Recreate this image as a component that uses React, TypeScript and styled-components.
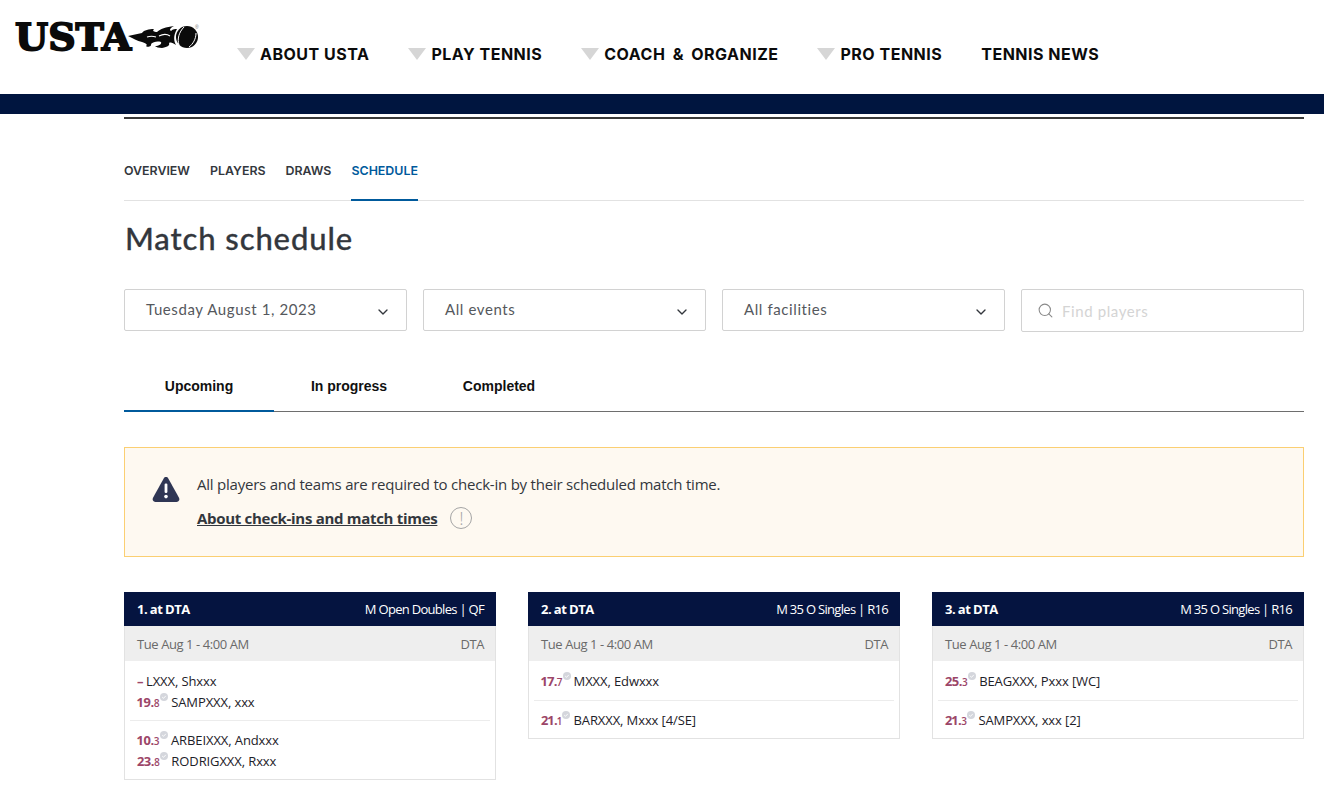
import React from 'react';
import styled, { createGlobalStyle } from 'styled-components';
import { ChevronDown, Search } from 'lucide-react';

const GlobalStyle = createGlobalStyle`
  html, body {
    margin: 0;
    padding: 0;
    background: #fff;
    overflow: hidden;
  }
  body {
    font-family: "Open Sans", "Noto Sans", sans-serif;
    color: #33373d;
  }
`;

type Player = { rating: string; sub?: string; name: string; check?: boolean };
type Match = { id: string; event: string; sides: Player[][] };

const navItems = [
  { label: 'ABOUT USTA', caret: true },
  { label: 'PLAY TENNIS', caret: true },
  { label: 'COACH & ORGANIZE', caret: true, wide: true },
  { label: 'PRO TENNIS', caret: true },
  { label: 'TENNIS NEWS', caret: false },
];

const matches: Match[] = [
  {
    id: '1. at DTA',
    event: 'M Open Doubles | QF',
    sides: [
      [
        { rating: '–', name: 'LXXX, Shxxx' },
        { rating: '19.', sub: '8', name: 'SAMPXXX, xxx', check: true },
      ],
      [
        { rating: '10.', sub: '3', name: 'ARBEIXXX, Andxxx', check: true },
        { rating: '23.', sub: '8', name: 'RODRIGXXX, Rxxx', check: true },
      ],
    ],
  },
  {
    id: '2. at DTA',
    event: 'M 35 O Singles | R16',
    sides: [
      [{ rating: '17.', sub: '7', name: 'MXXX, Edwxxx', check: true }],
      [{ rating: '21.', sub: '1', name: 'BARXXX, Mxxx [4/SE]', check: true }],
    ],
  },
  {
    id: '3. at DTA',
    event: 'M 35 O Singles | R16',
    sides: [
      [{ rating: '25.', sub: '3', name: 'BEAGXXX, Pxxx [WC]', check: true }],
      [{ rating: '21.', sub: '3', name: 'SAMPXXX, xxx [2]', check: true }],
    ],
  },
];

function Logo() {
  return (
    <LogoWrap>
      <LogoText>USTA</LogoText>
      <LogoMark width="72" height="28" viewBox="0 0 72 28">
        {/* flames */}
        <path
          d="M0 12 L14 9 C16 6 21 5 26 5 C24 7 26 8 29 8 C32 5 38 3 46 2 C42 4 41 6 43 7 C45 5 47 5 49 5 C46 10 45 16 48 21 C45 19 43 18 41 19 C42 21 40 23 34 24 C31 24 28 23 27 22 C31 22 34 20 33 18 C29 17 25 18 23 20 C24 22 20 24 18 22 C20 21 18 19 14 18 C9 17 5 14 0 12 Z"
          fill="#0a0a0a"
        />
        <path d="M31 12 C35 10 39 10 42 12 M19 13 C22 12 25 12 28 13" stroke="#fff" strokeWidth="1.1" fill="none" />
        {/* ball */}
        <circle cx="59" cy="13" r="11" fill="#0a0a0a" />
        <path d="M56 3 C51 8 49 15 51 21 M68 9 C68 15 65 20 61 23" stroke="#fff" strokeWidth="1" fill="none" />
        <text x="67" y="5" fontSize="5" fontFamily="Liberation Sans, sans-serif" fill="#777">®</text>
      </LogoMark>
    </LogoWrap>
  );
}

function WarningIcon() {
  return (
    <WarningSvg width="28" height="27" viewBox="0 0 28 27">
      <path
        d="M14 1 C15 1 15.8 1.5 16.3 2.4 L27 21.8 C28 23.7 26.8 26 24.6 26 L3.4 26 C1.2 26 0 23.7 1 21.8 L11.7 2.4 C12.2 1.5 13 1 14 1 Z"
        fill="#2f3654"
      />
      <rect x="12.6" y="7.5" width="2.8" height="9.5" rx="1.2" fill="#fff" />
      <circle cx="14" cy="20.6" r="1.8" fill="#fff" />
    </WarningSvg>
  );
}

function CheckBadge() {
  return (
    <BadgeSvg width="8" height="8" viewBox="0 0 8 8">
      <circle cx="4" cy="4" r="4" fill="#d4d6dc" />
      <path d="M2.2 4.1 L3.5 5.3 L5.8 2.9" stroke="#fff" strokeWidth="0.9" fill="none" />
    </BadgeSvg>
  );
}

function PlayerRow({ player }: { player: Player }) {
  return (
    <PlayerLine>
      <Rating>
        {player.rating}
        {player.sub && <RatingSub>{player.sub}</RatingSub>}
        {player.check && <CheckBadge />}
      </Rating>
      <PlayerName>{player.name}</PlayerName>
    </PlayerLine>
  );
}

export default function App() {
  return (
    <>
      <GlobalStyle />
      <Header>
        <Logo />
        <Nav>
          {navItems.map((item) => (
            <NavItem key={item.label} $wide={item.wide}>
              {item.caret && <Caret />}
              {item.label}
            </NavItem>
          ))}
        </Nav>
      </Header>
      <NavyBar />
      <Main>
        <TopRule />
        <PageTabs>
          <PageTab>OVERVIEW</PageTab>
          <PageTab>PLAYERS</PageTab>
          <PageTab>DRAWS</PageTab>
          <PageTab $active>SCHEDULE</PageTab>
        </PageTabs>
        <Title>Match schedule</Title>
        <Filters>
          <Select>
            Tuesday August 1, 2023
            <Chevron size={16} strokeWidth={2} />
          </Select>
          <Select>
            All events
            <Chevron size={16} strokeWidth={2} />
          </Select>
          <Select>
            All facilities
            <Chevron size={16} strokeWidth={2} />
          </Select>
          <SearchBox>
            <Search size={17} strokeWidth={1.5} color="#8a8a8a" />
            <SearchPlaceholder>Find players</SearchPlaceholder>
          </SearchBox>
        </Filters>
        <StatusTabs>
          <StatusTab $active>Upcoming</StatusTab>
          <StatusTab>In progress</StatusTab>
          <StatusTab>Completed</StatusTab>
        </StatusTabs>
        <Banner>
          <WarningIcon />
          <BannerBody>
            <BannerText>All players and teams are required to check-in by their scheduled match time.</BannerText>
            <BannerLinkRow>
              <BannerLink>About check-ins and match times</BannerLink>
              <InfoCircle>!</InfoCircle>
            </BannerLinkRow>
          </BannerBody>
        </Banner>
        <Cards>
          {matches.map((match) => (
            <Card key={match.id}>
              <CardHead>
                <CardTitle>{match.id}</CardTitle>
                <CardEvent>{match.event}</CardEvent>
              </CardHead>
              <CardBox>
                <CardDate>
                  <span>Tue Aug 1 - 4:00 AM</span>
                  <span>DTA</span>
                </CardDate>
                {match.sides.map((side, i) => (
                  <Side key={i}>
                    {side.map((p) => (
                      <PlayerRow key={p.name} player={p} />
                    ))}
                  </Side>
                ))}
              </CardBox>
            </Card>
          ))}
        </Cards>
      </Main>
    </>
  );
}

const Header = styled.header`
  height: 94px;
  display: flex;
  align-items: flex-start;
  background: #fff;
`;

const LogoWrap = styled.div`
  display: flex;
  align-items: flex-start;
  margin: 17px 0 0 15px;
  width: 222px;
  flex: none;
`;

const LogoText = styled.span`
  width: 113px;
  flex: none;
  font-family: "DejaVu Serif", serif;
  font-weight: 700;
  font-size: 38px;
  line-height: 40px;
  letter-spacing: 0;
  color: #0a0a0a;
  -webkit-text-stroke: 1.8px #0a0a0a;
`;

const LogoMark = styled.svg`
  flex: none;
  margin-top: 7px;
`;

const Nav = styled.nav`
  display: flex;
  gap: 39px;
  padding-top: 44px;
`;

const NavItem = styled.a<{ $wide?: boolean }>`
  display: flex;
  align-items: center;
  font-family: Inter, Roboto, sans-serif;
  font-size: 16px;
  font-weight: 700;
  line-height: 20px;
  letter-spacing: 0.5px;
  word-spacing: ${(p) => (p.$wide ? '3px' : '0')};
  color: #0b0b0b;
  white-space: nowrap;
`;

const Caret = styled.span`
  width: 0;
  height: 0;
  margin-right: 5px;
  border-left: 9px solid transparent;
  border-right: 9px solid transparent;
  border-top: 12px solid #d6d6d6;
`;

const NavyBar = styled.div`
  height: 20px;
  background: #00153f;
`;

const Main = styled.main`
  margin: 0 20px 0 124px;
`;

const TopRule = styled.div`
  height: 2px;
  margin-top: 3px;
  background: #3a3a3a;
`;

const PageTabs = styled.div`
  display: flex;
  gap: 20px;
  height: 82px;
  box-sizing: border-box;
  border-bottom: 1px solid #e2e2e2;
`;

const PageTab = styled.a<{ $active?: boolean }>`
  height: 82px;
  box-sizing: border-box;
  padding-top: 43px;
  font-family: Inter, Roboto, sans-serif;
  font-size: 12.4px;
  font-weight: 600;
  line-height: 18px;
  color: ${(p) => (p.$active ? '#005a9c' : '#33373d')};
  border-bottom: ${(p) => (p.$active ? '2px solid #005a9c' : '0')};
`;

const Title = styled.h1`
  margin: 17px 0 0 1px;
  font-family: Lato, "Open Sans", sans-serif;
  font-size: 31px;
  font-weight: 500;
  line-height: 40px;
  letter-spacing: 0.9px;
  color: #33373d;
  -webkit-text-stroke: 0.3px #33373d;
`;

const Filters = styled.div`
  display: grid;
  grid-template-columns: repeat(4, 1fr);
  gap: 16px;
  margin-top: 31px;
`;

const Select = styled.div`
  height: 42px;
  box-sizing: border-box;
  display: flex;
  align-items: center;
  justify-content: space-between;
  padding: 0 15px 2px 21px;
  border: 1px solid #d2d2d2;
  border-radius: 2px;
  font-family: Lato, sans-serif;
  font-size: 15px;
  letter-spacing: 0.6px;
  color: #55585d;
`;

const Chevron = styled(ChevronDown)`
  margin-top: 6px;
  color: #33373d;
`;

const SearchBox = styled.div`
  height: 43px;
  box-sizing: border-box;
  display: flex;
  align-items: center;
  gap: 8px;
  padding-left: 15px;
  border: 1px solid #d2d2d2;
  border-radius: 2px;
`;

const SearchPlaceholder = styled.span`
  font-family: Lato, sans-serif;
  font-size: 15px;
  letter-spacing: 0.6px;
  color: #d4d4d4;
`;

const StatusTabs = styled.div`
  display: flex;
  margin-top: 35px;
  border-bottom: 1px solid #6e6e6e;
`;

const StatusTab = styled.a<{ $active?: boolean }>`
  width: 150px;
  height: 45px;
  box-sizing: border-box;
  padding-top: 10px;
  margin-bottom: -1px;
  text-align: center;
  font-family: "Liberation Sans", Arial, sans-serif;
  font-size: 14px;
  font-weight: 700;
  line-height: 18px;
  color: #111;
  border-bottom: ${(p) => (p.$active ? '2px solid #005a9c' : '0')};
`;

const Banner = styled.section`
  display: flex;
  align-items: flex-start;
  gap: 17px;
  height: 110px;
  box-sizing: border-box;
  margin-top: 35px;
  padding: 26px 0 0 27px;
  background: #fef9f1;
  border: 1px solid #fbcf72;
`;

const WarningSvg = styled.svg`
  margin-top: 2px;
`;

const BannerBody = styled.div`
  display: flex;
  flex-direction: column;
`;

const BannerText = styled.div`
  font-size: 15px;
  line-height: 20px;
  letter-spacing: -0.22px;
  color: #33373d;
`;

const BannerLinkRow = styled.div`
  display: flex;
  align-items: center;
  gap: 13px;
  margin-top: 12px;
`;

const BannerLink = styled.a`
  font-size: 15px;
  font-weight: 700;
  line-height: 24px;
  letter-spacing: -0.3px;
  color: #33373d;
  text-decoration: underline;
`;

const InfoCircle = styled.span`
  width: 20px;
  height: 20px;
  display: flex;
  align-items: center;
  justify-content: center;
  border: 1.5px solid #a5a5a5;
  border-radius: 50%;
  font-size: 18px;
  font-weight: 300;
  color: #a5a5a5;
`;

const Cards = styled.div`
  display: grid;
  grid-template-columns: repeat(3, 372px);
  gap: 32px;
  margin-top: 35px;
  align-items: start;
`;

const Card = styled.article`
  display: flex;
  flex-direction: column;
`;

const CardHead = styled.div`
  height: 34px;
  display: flex;
  align-items: center;
  justify-content: space-between;
  padding: 0 12px 0 13px;
  background: #051440;
  color: #fff;
  font-size: 13px;
  letter-spacing: -0.55px;
`;

const CardTitle = styled.span`
  font-weight: 700;
`;

const CardEvent = styled.span`
  font-weight: 400;
  letter-spacing: -0.7px;
`;

const CardBox = styled.div`
  border: 1px solid #e2e2e2;
  border-top: 0;
`;

const CardDate = styled.div`
  height: 35px;
  display: flex;
  align-items: center;
  justify-content: space-between;
  padding: 0 11px 0 12px;
  background: #eeeeee;
  font-size: 13px;
  letter-spacing: -0.42px;
  color: #6a6a6a;
`;

const Side = styled.div`
  margin: 0 5px;
  padding: 10px 0 7px 7px;
  & + & {
    padding-top: 9px;
    border-top: 1px solid #ececec;
  }
  &:not(:last-child) > :only-child {
    margin-bottom: 1px;
  }
`;

const PlayerLine = styled.div`
  display: flex;
  align-items: baseline;
  height: 21px;
  font-size: 13px;
  line-height: 21px;
`;

const Rating = styled.span`
  margin-right: 3px;
  font-weight: 700;
  font-size: 13px;
  letter-spacing: -0.5px;
  font-variant-numeric: proportional-nums;
  color: #9c4668;
`;

const RatingSub = styled.span`
  font-size: 10px;
  font-weight: 600;
`;

const BadgeSvg = styled.svg`
  margin-left: 1px;
  vertical-align: 6px;
`;

const PlayerName = styled.span`
  letter-spacing: -0.1px;
  color: #1d2128;
`;
